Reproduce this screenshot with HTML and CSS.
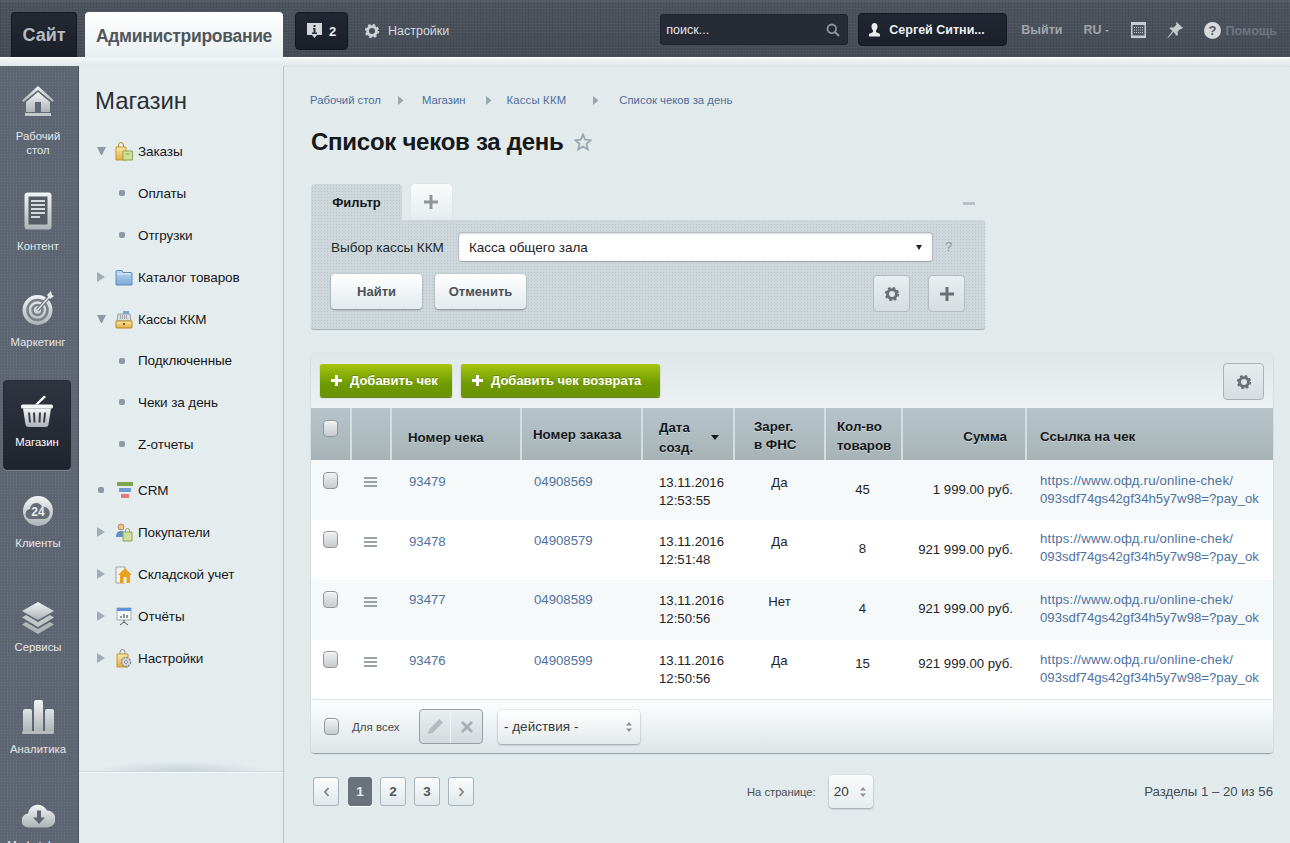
FILE: index.html
```html
<!DOCTYPE html>
<html lang="ru">
<head>
<meta charset="utf-8">
<title>Список чеков за день</title>
<link rel="stylesheet" href="styles.css">
</head>
<body>
<svg class="defs" aria-hidden="true">
  <defs>
    <linearGradient id="sg" x1="0" y1="0" x2="0" y2="1"><stop offset="0" stop-color="#f2f4f5"/><stop offset="1" stop-color="#aeb3b7"/></linearGradient>
    <linearGradient id="bag" x1="0" y1="0" x2="0" y2="1"><stop offset="0" stop-color="#f8e9a8"/><stop offset="1" stop-color="#e0ad3a"/></linearGradient>
    <linearGradient id="blue" x1="0" y1="0" x2="0" y2="1"><stop offset="0" stop-color="#bcd7f2"/><stop offset="1" stop-color="#7ba7d6"/></linearGradient>
    <symbol id="gear" viewBox="0 0 18 18">
      <circle cx="9" cy="9" r="5" fill="none" stroke="currentColor" stroke-width="3.2"/>
      <circle cx="9" cy="9" r="7" fill="none" stroke="currentColor" stroke-width="2" stroke-dasharray="2.9 2.6"/>
    </symbol>
    <symbol id="arrows" viewBox="0 0 8 12">
      <path d="M4 1 7 4.5H1ZM4 11 1 7.5H7Z" fill="#8c949a"/>
    </symbol>
    <symbol id="lines" viewBox="0 0 13 12">
      <path d="M0 1h13v2H0zM0 5h13v2H0zM0 9h13v2H0z" fill="#9aa2a7"/>
    </symbol>
  </defs>
</svg>

<header class="top">
  <a class="tab-site" href="#">Сайт</a>
  <a class="tab-admin" href="#">Администрирование</a>
  <a class="notify" href="#">
    <svg width="15" height="16" viewBox="0 0 15 16"><path d="M0 0h15v12H10l-2.5 3L5 12H0z" fill="#d4d7da"/><path d="M6.5 2h2v2h-2zM6 5h2.500v4.500H10V11H5V9.500h1.500V6.200H6z" fill="#2b303a"/></svg>
    <b>2</b>
  </a>
  <a class="settings" href="#"><svg class="ic-gear" width="16" height="16"><use href="#gear"/></svg>Настройки</a>
  <div class="right">
    <div class="search"><span>поиск...</span>
      <svg width="14" height="14" viewBox="0 0 14 14"><circle cx="5.8" cy="5.8" r="4.3" fill="none" stroke="#8d939a" stroke-width="1.8"/><path d="M9 9l4 4" stroke="#8d939a" stroke-width="2.2"/></svg>
    </div>
    <a class="user" href="#">
      <svg width="13" height="14" viewBox="0 0 13 14"><path d="M6.5 0C8.500 0 9.500 1.500 9.500 3.500S8.500 7 8 7.500V9l4 2v2.500H1V11l4-2V7.500C4.500 7 3.500 5.500 3.500 3.500S4.500 0 6.500 0Z" fill="#e9ebed"/></svg>
      Сергей Ситни...
    </a>
    <a class="logout" href="#">Выйти</a>
    <a class="lang" href="#">RU<i></i></a>
    <svg class="kbd" width="15" height="16" viewBox="0 0 15 16"><path d="M0 0h15v16H0z" fill="#c9cdd0"/><path d="M1.500 3h12v10.500h-12z" fill="#4c535c"/><path d="M3 5.500h9M3 8h9M3 10.500h9" stroke="#c9cdd0" stroke-dasharray="1 1"/></svg>
    <svg class="pin" width="16" height="17" viewBox="0 0 16 17"><path d="M9.500 0 16 6l-1.500 1-1-.3-3 3 .5 3-1.500 1L6.600 10 1 16l-.5-.5L5.500 9 2.500 6.500l1.200-1.300 3 .3 2.800-3L9 1z" fill="#c6cacd"/></svg>
    <a class="help" href="#"><svg width="17" height="17" viewBox="0 0 17 17"><circle cx="8.5" cy="8.5" r="8.5" fill="#d9dbdd"/><text x="8.5" y="13" class="help-q">?</text></svg><span>Помощь</span></a>
  </div>
</header>
<div class="strip"></div>

<div class="layout">
  <nav class="side">
    <a class="side-item side-home" href="#">
      <svg width="32" height="32" viewBox="0 0 32 32"><path d="M16 1 32 15.500l-1.500 1.500L16 5 1.500 17 0 15.500Z" fill="url(#sg)"/><path d="M16 7 28 17v10H19V17h-6v10H4V17Z" fill="url(#sg)"/><path d="M3 28h26v3H3z" fill="#c5c9cc"/></svg>
      <span>Рабочий<br>стол</span>
    </a>
    <a class="side-item side-content" href="#">
      <svg width="28" height="38" viewBox="0 0 28 38"><rect x="0.5" y="0.5" width="27" height="37" rx="3" fill="url(#sg)"/><rect x="4.5" y="4.5" width="19" height="28" fill="#565c66"/><path d="M7 8h14v2H7zM7 12h14v2H7zM7 16h14v2H7zM7 20h14v2H7zM7 24h9v2H7z" fill="#d6d9dc"/></svg>
      <span>Контент</span>
    </a>
    <a class="side-item side-mark" href="#">
      <svg width="32" height="36" viewBox="0 0 32 36"><circle cx="15.5" cy="20" r="15" fill="url(#sg)"/><circle cx="15.5" cy="20" r="10" fill="none" stroke="#7a8088" stroke-width="2.5"/><circle cx="15.5" cy="20" r="5" fill="none" stroke="#7a8088" stroke-width="2.5"/><path d="M15.5 20 28 6" stroke="#6a7079" stroke-width="3.5"/><path d="M15.5 20 28 6" stroke="#e6e8ea" stroke-width="1.5"/><path d="M25 5 29 1l1 4 2 1-4 3Z" fill="#e6e8ea"/></svg>
      <span>Маркетинг</span>
    </a>
    <a class="side-item side-active" href="#">
      <svg width="32" height="33" viewBox="0 0 32 33"><path d="M14 10 23 1l2 1.500L17 10Z" fill="#fff"/><rect x="0" y="10" width="32" height="4" rx="1.500" fill="#f4f5f6"/><path d="M2 14h28l-2.500 16a3 3 0 0 1-3 2.500H7.500a3 3 0 0 1-3-2.500Z" fill="url(#sg)"/><path d="M8 18l1 10M13 18l.5 10M19 18l-.5 10M24 18l-1 10" stroke="#3a3f48" stroke-width="2"/></svg>
      <span>Магазин</span>
    </a>
    <a class="side-item" href="#">
      <svg width="30" height="34" viewBox="0 0 30 34"><circle cx="15" cy="17" r="15" fill="url(#sg)"/><path d="M8 25a5 5 0 0 1-1-10 6 6 0 0 1 6-6c3 0 5 1.500 6 4a6 6 0 0 1 3 12Z" fill="#666c75"/><text x="15" y="22" class="num24">24</text></svg>
      <span>Клиенты</span>
    </a>
    <a class="side-item side-serv" href="#">
      <svg width="32" height="34" viewBox="0 0 32 34"><path d="M16 1 32 10 16 19 0 10Z" fill="url(#sg)"/><path d="M4 14 16 21 28 14 32 16.500 16 26 0 16.500Z" fill="#c3c7ca"/><path d="M4 21 16 28 28 21 32 23.500 16 33 0 23.500Z" fill="#b0b5b8"/></svg>
      <span>Сервисы</span>
    </a>
    <a class="side-item" href="#">
      <svg width="32" height="36" viewBox="0 0 32 36"><path d="M1 12a2 2 0 0 1 2-2h5a2 2 0 0 1 2 2v21H1ZM12 3a2 2 0 0 1 2-2h5a2 2 0 0 1 2 2v30h-9ZM23 12a2 2 0 0 1 2-2h5a2 2 0 0 1 2 2v21h-9Z" fill="url(#sg)"/><rect y="32" width="32" height="3" rx="1.500" fill="#b8bcbf"/></svg>
      <span>Аналитика</span>
    </a>
    <a class="side-item side-market" href="#">
      <svg width="33" height="27" viewBox="0 0 33 27"><path d="M7 26a7 7 0 0 1-1-14 10 10 0 0 1 19-3 8.500 8.500 0 0 1 0 17Z" fill="url(#sg)"/><path d="M15 9h4v7h4l-6 6.500-6-6.500h4Z" fill="#5f6670"/></svg>
      <span>Marketplace</span>
    </a>
  </nav>

  <aside class="menu">
    <h2 class="menu-title">Магазин</h2>
    <ul class="tree">
      <li class="t-row"><i class="arr-d"></i><svg class="mi" width="18" height="19" viewBox="0 0 18 19"><path d="M1 5h10v13H1z" fill="url(#bag)" stroke="#c9952f"/><path d="M3.500 5V3a2.500 2.500 0 0 1 5 0v2" fill="none" stroke="#b5892f"/><path d="M8 9h9.500v9H8z" fill="#cfe09a" stroke="#8fa55b"/><path d="M10.500 12h4" stroke="#8fa55b"/></svg><a href="#">Заказы</a></li>
      <li class="t-row t-sub"><i class="dot"></i><a href="#">Оплаты</a></li>
      <li class="t-row t-sub"><i class="dot"></i><a href="#">Отгрузки</a></li>
      <li class="t-row"><i class="arr-r"></i><svg class="mi" width="18" height="19" viewBox="0 0 18 19"><path d="M1 3.500A1 1 0 0 1 2 2.500h5l1 2h8a1 1 0 0 1 1 1V17H1Z" fill="url(#blue)" stroke="#5f8dbd"/><path d="M2 6h14" stroke="#e4f0fb"/></svg><a href="#">Каталог товаров</a></li>
      <li class="t-row"><i class="arr-d"></i><svg class="mi" width="18" height="19" viewBox="0 0 18 19"><path d="M8 1h6v3H8z" fill="#6fa7df"/><path d="M3 4h12l1 7H2z" fill="#d9dde0" stroke="#9ca3a8"/><path d="M5 6h8M5 8h8" stroke="#6d747a" stroke-dasharray="1 1"/><path d="M1 11h16v6a1 1 0 0 1-1 1H2a1 1 0 0 1-1-1Z" fill="url(#bag)" stroke="#b98a25"/><path d="M8 13h2v2H8z" fill="#7a5b12"/></svg><a href="#">Кассы ККМ</a></li>
      <li class="t-row t-sub t-tight"><i class="dot"></i><a href="#">Подключенные</a></li>
      <li class="t-row t-sub"><i class="dot"></i><a href="#">Чеки за день</a></li>
      <li class="t-row t-sub"><i class="dot"></i><a href="#">Z-отчеты</a></li>
      <li class="t-row t-crm"><i class="dot dot-top"></i><svg class="mi" width="18" height="17" viewBox="0 0 18 17"><path d="M1 0h16v4H1z" fill="#7fa24a"/><path d="M3 6h12v4H3z" fill="#6f9bd4"/><path d="M5 12h8v4H5z" fill="#e47a78"/></svg><a href="#">CRM</a></li>
      <li class="t-row"><i class="arr-r"></i><svg class="mi" width="18" height="19" viewBox="0 0 18 19"><circle cx="6" cy="4" r="3" fill="#eebf8f" stroke="#b28a5f"/><path d="M1 14c0-4 2-6 5-6s4 2 4 3v3Z" fill="#5e8fcb"/><path d="M8 9h9v9H8z" fill="#cfe09a" stroke="#8fa55b"/><path d="M10.500 9V7.500a2 2 0 0 1 4 0V9" fill="none" stroke="#8fa55b"/></svg><a href="#">Покупатели</a></li>
      <li class="t-row"><i class="arr-r"></i><svg class="mi" width="18" height="19" viewBox="0 0 18 19"><path d="M1 2h9v16H1z" fill="#f3f3ef" stroke="#a3a5a2"/><path d="M10 3 17 10h-2v8H5v-8H3Z" fill="#eba01f"/><path d="M8.500 12h3v6h-3z" fill="#fff2cf"/></svg><a href="#">Складской учет</a></li>
      <li class="t-row"><i class="arr-r"></i><svg class="mi" width="18" height="19" viewBox="0 0 18 19"><path d="M2 1h14v12H2z" fill="#f5f7f8" stroke="#a5abb0"/><path d="M2 1h14v3H2z" fill="#5e93d6"/><path d="M6 11V9M9 11V7M12 11V8" stroke="#6f767c" stroke-width="1.5"/><path d="M9 13v2M9 15l-4 3M9 15l4 3" stroke="#4d5358"/></svg><a href="#">Отчёты</a></li>
      <li class="t-row"><i class="arr-r"></i><svg class="mi" width="18" height="19" viewBox="0 0 18 19"><path d="M2 5h11v13H2z" fill="url(#bag)" stroke="#c9952f"/><path d="M5 5V3a2.500 2.500 0 0 1 5 0v2" fill="none" stroke="#8f8f8f"/><circle cx="11" cy="13" r="4.5" fill="#d7dadc" stroke="#858b90" stroke-width="1.5" stroke-dasharray="2 1"/><circle cx="11" cy="13" r="1.5" fill="#fff" stroke="#858b90"/></svg><a href="#">Настройки</a></li>
    </ul>
    <div class="menu-sep"></div>
  </aside>

  <main class="main">
    <div class="crumbs">
      <a href="#">Рабочий стол</a><i></i><a href="#">Магазин</a><i class="second"></i><a class="crumb-kkm" href="#">Кассы ККМ</a><i class="wide"></i><a href="#">Список чеков за день</a>
    </div>
    <h1 class="title">Список чеков за день
      <svg width="18" height="18" viewBox="0 0 18 18"><path d="M9 1.500 11.200 6.700l5.600.5-4.300 3.700 1.300 5.500L9 13.500 4.200 16.400l1.300-5.500L1.200 7.200l5.600-.5Z" fill="none" stroke="#9aa5ad" stroke-width="1.8"/></svg>
    </h1>

    <section class="filter">
      <div class="f-tabs">
        <span class="f-tab">Фильтр</span>
        <span class="f-add"><svg width="14" height="14" viewBox="0 0 14 14"><path d="M5.500 0h3v5.500H14v3H8.500V14h-3V8.500H0v-3h5.500Z" fill="#8d959b"/></svg></span>
        <span class="f-min"></span>
      </div>
      <div class="f-panel">
        <div class="f-line">
          <label class="f-label">Выбор кассы ККМ</label>
          <div class="f-select">Касса общего зала<i></i></div>
          <span class="f-q">?</span>
        </div>
        <div class="f-btns">
          <button class="btn btn-find">Найти</button>
          <button class="btn btn-cancel">Отменить</button>
          <button class="sq sq-first"><svg width="16" height="16" class="ic-dark"><use href="#gear"/></svg></button>
          <button class="sq sq-second"><svg width="14" height="14" viewBox="0 0 14 14"><path d="M5.500 0h3v5.500H14v3H8.500V14h-3V8.500H0v-3h5.500Z" fill="#687076"/></svg></button>
        </div>
      </div>
    </section>

    <section class="grid-box">
      <div class="toolbar">
        <button class="green green-a"><svg width="11" height="11" viewBox="0 0 11 11"><path d="M4 0h3v4h4v3H7v4H4V7H0V4h4Z" fill="#fff"/></svg>Добавить чек</button>
        <button class="green green-b"><svg width="11" height="11" viewBox="0 0 11 11"><path d="M4 0h3v4h4v3H7v4H4V7H0V4h4Z" fill="#fff"/></svg>Добавить чек возврата</button>
        <button class="tb-gear"><svg width="16" height="16" class="ic-dark"><use href="#gear"/></svg></button>
      </div>
      <table class="grid">
        <colgroup>
          <col class="c1"><col class="c2"><col class="c3"><col class="c4"><col class="c5"><col class="c6"><col class="c7"><col class="c8"><col class="c9">
        </colgroup>
        <thead>
          <tr>
            <th class="th-check"><span class="cb"></span></th>
            <th></th>
            <th class="th-num">Номер чека</th>
            <th class="th-order">Номер заказа</th>
            <th class="th-date"><span class="date-head">Дата<br>созд.</span><i></i></th>
            <th class="th-fns">Зарег.<br>в ФНС</th>
            <th class="th-qty">Кол-во<br>товаров</th>
            <th class="th-sum">Сумма</th>
            <th class="th-link">Ссылка на чек</th>
          </tr>
        </thead>
        <tbody>
          <tr class="r1">
            <td class="td-check"><span class="cb"></span></td>
            <td class="td-lines"><svg width="13" height="12"><use href="#lines"/></svg></td>
            <td class="td-num"><a href="#">93479</a></td>
            <td class="td-order"><a href="#">04908569</a></td>
            <td class="td-date">13.11.2016<br>12:53:55</td>
            <td class="td-yes">Да</td>
            <td class="td-qty">45</td>
            <td class="td-sum">1 999.00 руб.</td>
            <td class="td-link"><a href="#"><span class="l1">https://www.офд.ru/online-chek/</span><br>093sdf74gs42gf34h5y7w98=?pay_ok</a></td>
          </tr>
          <tr class="r2">
            <td class="td-check"><span class="cb"></span></td>
            <td class="td-lines"><svg width="13" height="12"><use href="#lines"/></svg></td>
            <td class="td-num"><a href="#">93478</a></td>
            <td class="td-order"><a href="#">04908579</a></td>
            <td class="td-date">13.11.2016<br>12:51:48</td>
            <td class="td-yes">Да</td>
            <td class="td-qty">8</td>
            <td class="td-sum">921 999.00 руб.</td>
            <td class="td-link"><a href="#"><span class="l1">https://www.офд.ru/online-chek/</span><br>093sdf74gs42gf34h5y7w98=?pay_ok</a></td>
          </tr>
          <tr class="r3">
            <td class="td-check"><span class="cb"></span></td>
            <td class="td-lines"><svg width="13" height="12"><use href="#lines"/></svg></td>
            <td class="td-num"><a href="#">93477</a></td>
            <td class="td-order"><a href="#">04908589</a></td>
            <td class="td-date">13.11.2016<br>12:50:56</td>
            <td class="td-yes">Нет</td>
            <td class="td-qty">4</td>
            <td class="td-sum">921 999.00 руб.</td>
            <td class="td-link"><a href="#"><span class="l1">https://www.офд.ru/online-chek/</span><br>093sdf74gs42gf34h5y7w98=?pay_ok</a></td>
          </tr>
          <tr class="r4">
            <td class="td-check"><span class="cb"></span></td>
            <td class="td-lines"><svg width="13" height="12"><use href="#lines"/></svg></td>
            <td class="td-num"><a href="#">93476</a></td>
            <td class="td-order"><a href="#">04908599</a></td>
            <td class="td-date">13.11.2016<br>12:50:56</td>
            <td class="td-yes">Да</td>
            <td class="td-qty">15</td>
            <td class="td-sum">921 999.00 руб.</td>
            <td class="td-link"><a href="#"><span class="l1">https://www.офд.ru/online-chek/</span><br>093sdf74gs42gf34h5y7w98=?pay_ok</a></td>
          </tr>
        </tbody>
      </table>
      <div class="g-foot">
        <span class="cb"></span>
        <span class="for-all">Для всех</span>
        <div class="edit-group">
          <span class="eg-cell eg-left"><svg width="17" height="17" viewBox="0 0 17 17"><path d="M12.500 1 16 4.500 5.500 15 1 16l1-4.500Z" fill="#b4babd"/></svg></span>
          <span class="eg-cell"><svg width="12" height="12" viewBox="0 0 12 12"><path d="M2 0 6 4l4-4 2 2-4 4 4 4-2 2-4-4-4 4-2-2 4-4-4-4Z" fill="#a8aeb2"/></svg></span>
        </div>
        <div class="act-select">- действия -<svg width="8" height="12"><use href="#arrows"/></svg></div>
      </div>
    </section>

    <div class="pager">
      <a class="pg pg-prev" href="#"><svg width="7" height="10" viewBox="0 0 7 10"><path d="M5.500 1 2 5l3.500 4" fill="none" stroke="#7d858b" stroke-width="1.8"/></svg></a>
      <a class="pg pg-on" href="#">1</a>
      <a class="pg" href="#">2</a>
      <a class="pg" href="#">3</a>
      <a class="pg" href="#"><svg width="7" height="10" viewBox="0 0 7 10"><path d="M1.500 1 5 5 1.500 9" fill="none" stroke="#7d858b" stroke-width="1.8"/></svg></a>
      <span class="per-label">На странице:</span>
      <div class="per-select">20<svg width="8" height="12"><use href="#arrows"/></svg></div>
      <span class="range">Разделы 1 – 20 из 56</span>
    </div>
  </main>
</div>
</body>
</html>
```

FILE: styles.css
```css
* { box-sizing: border-box; }
html, body { margin: 0; height: 843px; overflow: hidden; }
body { font-family: "Liberation Sans", Arial, sans-serif; font-size: 13px; color: #222; background: #e2eaec; }
a { color: inherit; text-decoration: none; }
ul { list-style: none; margin: 0; padding: 0; }
button { font-family: inherit; cursor: pointer; padding: 0; }
i { display: block; }
.defs { position: absolute; width: 0; height: 0; }

/* top bar */
.top {
  height: 58px; display: flex; align-items: flex-start; padding: 12px 0 0 11px;
  border-bottom: 1px solid #fff;
  background:
    repeating-linear-gradient(0deg, rgba(255,255,255,.035) 0 1px, transparent 1px 3px),
    repeating-linear-gradient(90deg, rgba(0,0,0,.06) 0 1px, transparent 1px 3px),
    linear-gradient(#4d545e, #454c56);
  box-shadow: inset 0 2px 0 rgba(255,255,255,.06);
}
.tab-site {
  width: 66px; height: 45px; border-radius: 4px 4px 0 0; background: linear-gradient(#232833, #1b202a);
  border: 1px solid #14181f; border-bottom: 0; color: #b9bcc1; font: bold 18px/44px "Liberation Sans", sans-serif; text-align: center;
}
.tab-admin {
  width: 198px; height: 46px; margin-left: 8px; border-radius: 4px 4px 0 0; background: linear-gradient(#fff, #e9eff1);
  color: #50565c; font: bold 17.5px/48px "Liberation Sans", sans-serif; letter-spacing: -.3px; text-align: center;
}
.notify {
  width: 53px; height: 38px; margin-left: 12px; border-radius: 4px; background: linear-gradient(#222733, #1a1f29);
  border: 1px solid #15191f; display: flex; align-items: center; gap: 7px; padding-left: 11px;
  color: #eceef0; font-size: 13px;
}
.settings { display: flex; align-items: center; gap: 8px; margin: 10px 0 0 16px; color: #d6d9dc; font-size: 12.5px; height: 18px; }
.ic-gear { color: #d0d3d6; }
.right { margin-left: auto; display: flex; align-items: flex-start; }
.search {
  width: 188px; height: 31px; margin-top: 2px; border-radius: 3px; background: #262b36; border: 1px solid #20242c;
  display: flex; align-items: center; justify-content: space-between; padding: 0 7px 0 5px; color: #e5e7e9; font-size: 12.5px;
}
.user {
  width: 149px; height: 33px; margin: 1px 0 0 10px; border-radius: 4px; background: linear-gradient(#212632, #1b202a);
  border: 1px solid #15191f; display: flex; align-items: center; gap: 8px; padding-left: 9px;
  color: #eef0f2; font: bold 12.5px "Liberation Sans", sans-serif;
}
.logout { margin: 11px 0 0 14px; color: #a1a6ac; font: bold 12.5px/14px "Liberation Sans", sans-serif; }
.lang { margin: 11px 0 0 21px; color: #a1a6ac; font: bold 12.5px/14px "Liberation Sans", sans-serif; display: flex; align-items: center; gap: 3px; }
.lang i { border: 2.5px solid transparent; border-top-color: #a1a6ac; margin-top: 3px; }
.kbd { margin: 10px 0 0 22px; }
.pin { margin: 10px 0 0 21px; }
.help { display: flex; align-items: center; gap: 5px; margin: 10px 13px 0 21px; color: #6f7680; font: bold 12.5px "Liberation Sans", sans-serif; }
.help-q { font: bold 13px "Liberation Sans", sans-serif; fill: #50565e; text-anchor: middle; }
.strip { height: 8px; background: linear-gradient(#f3f6f7, #e1e9eb); }

/* layout */
.layout { display: flex; height: 777px; overflow: hidden; }
.side {
  width: 79px; flex: none; border-right: 1px solid #4c535d; padding: 16px 2px 0 0; overflow: hidden;
  background-color: #5e6572;
  background-image: radial-gradient(rgba(255,255,255,.09) .8px, transparent .9px);
  background-size: 3px 3px;
  display: grid; grid-template-columns: 1fr; grid-template-rows: 110px 97px 91px 112px 107px 99px 101px 60px; height: 777px;
}
.side-item { display: flex; flex-direction: column; align-items: center; color: #e3e5e8; font-size: 11.3px; line-height: 14px; text-align: center; }
.side-item svg { height: 38px; }
.side-item span { margin-top: 6px; }
.side-home span, .side-content span { margin-top: 9px; }
.side-mark span { margin-top: 8px; }
.side-serv span { margin-top: 3px; }
.side-market svg { margin-top: -3px; }
.side-market span { margin-top: 4px; }
.side-active {
  margin: 0 5px 0 3px; height: 90px; padding-top: 11px; border-radius: 4px; color: #fff;
  background: linear-gradient(#2f343f, #20242d); border: 1px solid #272b33; box-shadow: 0 1px 0 rgba(255,255,255,.2);
}
.side-active span { margin-top: 5px; }

/* menu column */
.menu { width: 205px; flex: none; border-right: 1px solid #b7c5cf; position: relative; background: #e5ecee; }
.menu-title { margin: 0; padding: 20px 0 0 16px; font: 400 24px/30px "Liberation Sans", sans-serif; letter-spacing: -.1px; color: #2b2f33; height: 64px; }
.t-row { height: 42px; display: flex; align-items: center; padding-left: 18px; font-size: 13.5px; letter-spacing: -.1px; color: #15191c; }
.t-tight { height: 41px; }
.t-crm { margin-top: 4px; }
.mi { margin-left: 9px; margin-right: 5px; flex: none; }
.t-row a { display: block; }
.arr-d { height: 0; border: 4.5px solid transparent; border-top: 8px solid #8d99a3; border-bottom: 0; flex: none; width: 9px; }
.arr-r { width: 8px; height: 10px; border-left: 8px solid #a0adb7; border-top: 5px solid transparent; border-bottom: 5px solid transparent; flex: none; margin-right: 1px; }
.dot { width: 6px; height: 6px; border-radius: 2px; background: #8d99a6; flex: none; margin-left: 22px; margin-right: 13px; }
.dot-top { margin-left: 1px; margin-right: 2px; }
.t-crm .mi { margin-left: 10px; margin-right: 4px; }
.menu-sep { position: absolute; left: 0; right: 0; top: 705px; height: 2px; background: #cbd6dd; border-bottom: 1px solid #f5f8f9; }
.menu-sep::before { content: ""; position: absolute; left: 15px; right: 15px; top: -10px; height: 10px; background: radial-gradient(ellipse at 50% 100%, #c6d2d9, transparent 70%); }

/* main */
.main { flex: 1; min-width: 0; padding: 26px 17px 0 27px; border-top: 1px dotted #d1dadd; }
.crumbs { display: flex; align-items: center; font-size: 11.3px; line-height: 14px; color: #4c6e9c; height: 14px; margin-left: -1px; }
.crumbs i { width: 5px; height: 9px; border-left: 5px solid #9aa6ae; border-top: 4.5px solid transparent; border-bottom: 4.5px solid transparent; margin: 0 19px 0 17px; }
.crumbs i.second { margin: 0 16px 0 20px; }
.crumbs i.wide { margin: 0 21px 0 27px; }
.crumb-kkm { letter-spacing: .2px; }
.title { margin: 20px 0 0; font: bold 24px/30px "Liberation Sans", sans-serif; letter-spacing: -.26px; color: #15181b; display: flex; align-items: center; gap: 10px; height: 30px; }

/* filter */
.filter { width: 674px; margin-top: 27px; }
.f-tabs { display: flex; height: 36px; position: relative; align-items: flex-end; }
.f-tab {
  width: 91px; height: 36px; border-radius: 4px 4px 0 0; text-align: center; font: bold 13px/37px "Liberation Sans", sans-serif; color: #15181b;
  background-color: #ced8dc; background-image: radial-gradient(rgba(0,0,0,.09) .7px, transparent .8px); background-size: 3px 3px;
}
.f-add { width: 41px; height: 36px; margin-left: 9px; padding-right: 2px; border-radius: 4px 4px 0 0; background: linear-gradient(#fafbfb, #e6ecee); display: flex; align-items: center; justify-content: center; box-shadow: 0 0 1px #b9c4ca; }
.f-min { position: absolute; right: 10px; top: 18px; width: 12px; height: 3px; background: #b8c0c6; }
.f-panel {
  height: 109px; padding: 12px 20px 0; border-radius: 0 3px 3px 3px; box-shadow: 0 1px 1px #9fadb5;
  background-color: #ced8dc; background-image: radial-gradient(rgba(0,0,0,.09) .7px, transparent .8px); background-size: 3px 3px;
}
.f-line { display: flex; align-items: center; height: 30px; }
.f-label { width: 127px; font-size: 13.5px; color: #22272b; }
.f-select {
  width: 475px; height: 30px; background: #fff; border-radius: 4px; border: 1px solid #b4bec4; border-bottom-color: #9aa6ad; box-shadow: inset 0 1px 2px #d5d9db;
  font-size: 13.5px; line-height: 30px; padding: 0 10px; position: relative; color: #1f2326;
}
.f-select i { position: absolute; right: 10px; top: 12px; border: 3.5px solid transparent; border-top: 5px solid #222; border-bottom: 0; }
.f-q { margin-left: 12px; color: #8a949b; font-size: 13px; margin-top: -2px; }
.f-btns { display: flex; margin-top: 12px; align-items: flex-start; }
.btn {
  height: 35px; border: 0; border-radius: 4px; background: linear-gradient(#fff, #e4eaec); box-shadow: 0 1px 2px #7f8c93, 0 0 1px #8c989e;
  font: bold 13px "Liberation Sans", sans-serif; color: #4a5157;
}
.btn-find { width: 91px; }
.btn-cancel { width: 91px; margin-left: 13px; }
.sq { width: 37px; height: 37px; margin-top: 1px; border-radius: 4px; border: 1px solid #b1bcc2; background: linear-gradient(#e9eef0, #d5dde0); display: flex; align-items: center; justify-content: center; }
.sq-first { margin-left: auto; }
.sq-second { margin-left: 18px; }
.ic-dark { color: #666e74; }

/* grid */
.grid-box { width: 962px; margin-top: 24px; height: 400px; border-radius: 4px; box-shadow: 0 0 1px #aab6bd, 0 1px 1px #8f9da5; overflow: hidden; background: #fff; }
.toolbar { height: 55px; display: flex; align-items: flex-start; padding: 11px 9px 0; background: linear-gradient(#dfe7e9, #edf1f2); }
.green {
  height: 33px; border: 0; border-radius: 2px; display: flex; align-items: center; gap: 8px; padding-left: 11px; color: #fff;
  background: linear-gradient(#a9c40f, #6f9b00 60%, #6a9300); box-shadow: 0 1px 1px #5d7d14;
  font: bold 13px "Liberation Sans", sans-serif; text-shadow: 0 -1px 0 rgba(70,90,0,.5);
}
.green-a { width: 132px; }
.green-b { width: 199px; margin-left: 9px; }
.tb-gear { width: 41px; height: 37px; margin-left: auto; margin-top: -1px; border: 1px solid #a8b2b8; border-radius: 4px; background: linear-gradient(#e7ecee, #d6dee1); display: flex; align-items: center; justify-content: center; }

.grid { width: 962px; table-layout: fixed; border-collapse: collapse; }
.c1, .c2 { width: 40px; } .c3 { width: 130px; } .c4 { width: 121px; } .c5 { width: 92px; } .c6 { width: 91px; } .c7 { width: 77px; } .c8 { width: 124px; } .c9 { width: 247px; }
.grid th {
  height: 52px; padding: 0; font: bold 13.3px/18px "Liberation Sans", sans-serif; color: #15181b; text-align: left; border-left: 2px solid #d4dde0;
  background: linear-gradient(#b6c4ca, #a7b3b6); text-shadow: 0 1px 0 rgba(255,255,255,.4); position: relative;
}
.grid th:first-child { border-left: 0; }
.th-check .cb { position: absolute; left: 12px; top: 12px; }
.grid .th-num { padding: 8px 0 0 16px; }
.grid .th-order { padding: 2px 0 0 11px; }
.grid .th-date { padding: 7px 0 0 16px; line-height: 20px; }
.date-head { display: block; }
.th-date i { position: absolute; right: 14px; top: 27px; border: 4px solid transparent; border-top: 5px solid #15181b; border-bottom: 0; }
.grid .th-fns { padding: 4px 0 0 19px; }
.grid .th-qty { padding: 3px 0 0 11px; line-height: 19px; }
.grid .th-sum { text-align: right; padding: 6px 18px 0 0; }
.grid .th-link { padding: 6px 0 0 13px; }
.grid td { height: 60px; padding: 0; font-size: 13.2px; line-height: 18px; vertical-align: top; color: #1f2326; }
.grid tbody tr:nth-child(odd) td { background: #f5f9fa; }
.grid tbody tr:last-child td { height: 59px; }
.grid td a { color: #4f729f; }
.l1 { letter-spacing: .2px; }

.grid .td-check { padding: 12px 0 0 12px; }
.grid .td-lines { padding: 15px 0 0 13px; }
.grid .td-num { padding-left: 18px; }
.grid .td-order { padding: 13px 0 0 13px; }
.grid .td-date { padding-left: 17px; }
.td-yes, .td-qty { text-align: center; }
.grid .td-qty { padding-right: 2px; }
.td-sum { text-align: right; }
.grid .td-sum { padding-right: 13px; }
.grid .td-link { padding-left: 14px; }

.grid .r2 .td-check, .grid .r3 .td-check, .grid .r4 .td-check { padding-top: 11px; }
.grid .r2 .td-order { padding-top: 12px; }
.grid .r3 .td-order { padding-top: 11px; }
.grid .r4 .td-order { padding-top: 12px; }

.grid .r1 .td-num { padding-top: 13px; } .grid .r1 .td-date { padding-top: 14px; } .grid .r1 .td-yes { padding-top: 14px; } .grid .r1 .td-qty { padding-top: 21px; } .grid .r1 .td-sum { padding-top: 21px; } .grid .r1 .td-link { padding-top: 12px; }
.grid .r2 .td-num { padding-top: 13px; } .grid .r2 .td-date { padding-top: 13px; } .grid .r2 .td-yes { padding-top: 13px; } .grid .r2 .td-qty { padding-top: 20px; } .grid .r2 .td-sum { padding-top: 21px; } .grid .r2 .td-link { padding-top: 10px; }
.grid .r3 .td-num { padding-top: 11px; } .grid .r3 .td-date { padding-top: 12px; } .grid .r3 .td-yes { padding-top: 13px; } .grid .r3 .td-qty { padding-top: 20px; } .grid .r3 .td-sum { padding-top: 20px; } .grid .r3 .td-link { padding-top: 11px; }
.grid .r4 .td-num { padding-top: 12px; } .grid .r4 .td-date { padding-top: 12px; } .grid .r4 .td-yes { padding-top: 12px; } .grid .r4 .td-qty { padding-top: 15px; } .grid .r4 .td-sum { padding-top: 15px; } .grid .r4 .td-link { padding-top: 11px; }

.cb { display: block; width: 15px; height: 17px; border-radius: 4px; border: 1px solid #8f979c; background: linear-gradient(#f0f2f3, #c6cbce); box-shadow: inset 0 1px 0 #fff; }
.g-foot { height: 54px; border-top: 1px solid #e1e7ea; display: flex; align-items: center; padding-left: 13px; background: linear-gradient(#fdfefe, #dde5e8); }
.for-all { margin-left: 13px; font-size: 11.5px; color: #454b50; width: 67px; }
.edit-group { width: 64px; height: 35px; border: 1px solid #93a0a7; border-radius: 4px; display: flex; background: linear-gradient(#e9eef0, #d3dbde); }
.eg-cell { flex: 1; display: flex; align-items: center; justify-content: center; }
.eg-left { border-right: 1px solid #eef2f3; flex: 0 0 31px; }
.act-select { width: 142px; height: 34px; margin-left: 15px; border-radius: 4px; background: linear-gradient(#fff, #e3e9eb); box-shadow: 0 1px 2px #95a2a9, 0 0 1px #a0acb2; display: flex; align-items: center; justify-content: space-between; padding: 0 7px 0 6px; font-size: 13.5px; color: #333a3f; }

/* pager */
.pager { display: flex; align-items: center; height: 33px; margin-top: 22px; padding-left: 2px; width: 962px; }
.pg { width: 26px; height: 29px; margin-right: 8px; border: 1px solid #a7b4bb; border-radius: 3px; background: linear-gradient(#fbfcfc, #e0e8ea); display: flex; align-items: center; justify-content: center; font: bold 13.5px "Liberation Sans", sans-serif; color: #50565b; }
.pg-prev { margin-right: 9px; }
.pg-on { width: 24px; background: #6a727b; border-color: #6a727b; color: #e9ebec; box-shadow: 0 1px 0 #fff; }
.per-label { margin-left: 265px; font-size: 11.2px; color: #474d52; }
.per-select { width: 44px; height: 33px; margin-left: 13px; border-radius: 4px; background: linear-gradient(#fbfcfc, #e6ecee); box-shadow: 0 1px 2px #95a2a9, 0 0 1px #a0acb2; display: flex; align-items: center; justify-content: space-between; padding: 0 6px 0 5px; font-size: 13.5px; color: #33393e; }
.range { margin-left: auto; font-size: 13.2px; color: #434a50; }
.num24 { font: bold 12px "Liberation Sans", sans-serif; fill: #e9ebed; text-anchor: middle; }
```
